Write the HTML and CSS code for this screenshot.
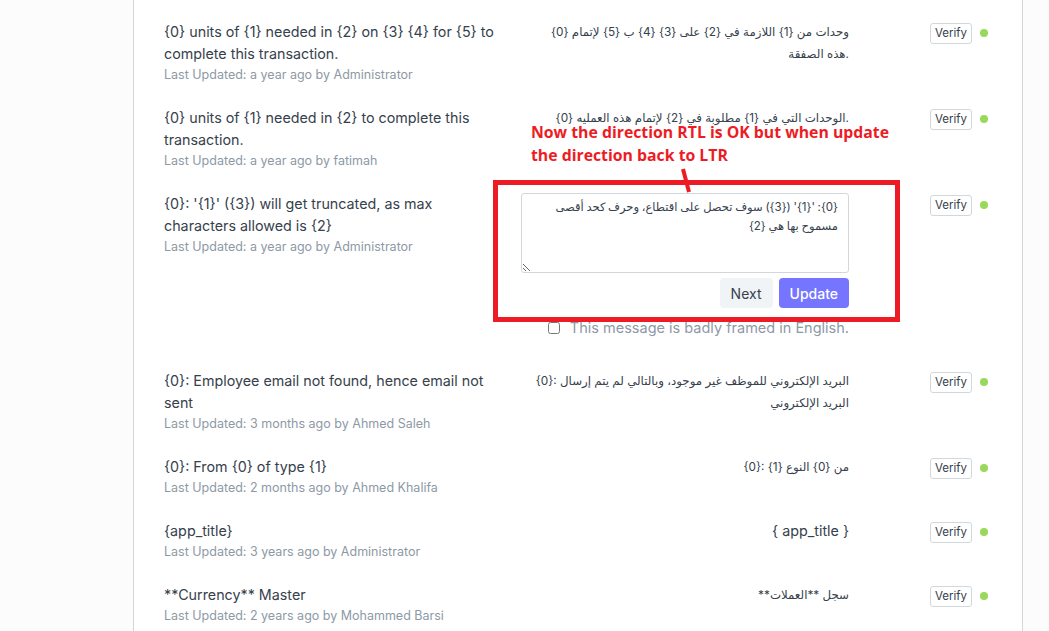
FILE: index.html
```html
<!DOCTYPE html>
<html lang="en">
<head>
  <meta charset="UTF-8">
  <meta name="viewport" content="width=device-width, initial-scale=1.0">
  <title>Translation Tool</title>
  <link rel="stylesheet" href="styles.css">
</head>
<body>
  <div class="page">
    <div class="card">
      <div class="message-list">

        <div class="message-row">
          <div class="source">
            <div class="source-text">{0} units of {1} needed in {2} on {3} {4} for {5} to complete this transaction.</div>
            <div class="meta">Last Updated: a year ago by Administrator</div>
          </div>
          <div class="translated">وحدات من {1} اللازمة في {2} على {3} {4} ب {5} لإتمام {0} هذه الصفقة.</div>
          <div class="status">
            <button class="verify-btn">Verify</button>
            <span class="dot"></span>
          </div>
        </div>

        <div class="message-row">
          <div class="source">
            <div class="source-text">{0} units of {1} needed in {2} to complete this transaction.</div>
            <div class="meta">Last Updated: a year ago by fatimah</div>
          </div>
          <div class="translated">الوحدات التي في {1} مطلوبة في {2} لإتمام هذه العمليه {0}.</div>
          <div class="status">
            <button class="verify-btn">Verify</button>
            <span class="dot"></span>
          </div>
        </div>

        <div class="message-row editing">
          <div class="source">
            <div class="source-text">{0}: '{1}' ({3}) will get truncated, as max characters allowed is {2}</div>
            <div class="meta">Last Updated: a year ago by Administrator</div>
          </div>
          <div class="editor">
            <textarea class="edit-box" dir="rtl">{0}: '{1}' ({3}) سوف تحصل على اقتطاع، وحرف كحد أقصى مسموح بها هي {2}</textarea>
            <div class="edit-actions">
              <button class="btn btn-default">Next</button>
              <button class="btn btn-primary">Update</button>
            </div>
            <label class="badly-framed">
              <input type="checkbox">
              <span>This message is badly framed in English.</span>
            </label>
          </div>
          <div class="status">
            <button class="verify-btn">Verify</button>
            <span class="dot"></span>
          </div>
        </div>

        <div class="message-row">
          <div class="source">
            <div class="source-text">{0}: Employee email not found, hence email not sent</div>
            <div class="meta">Last Updated: 3 months ago by Ahmed Saleh</div>
          </div>
          <div class="translated">{0}: البريد الإلكتروني للموظف غير موجود، وبالتالي لم يتم إرسال البريد الإلكتروني</div>
          <div class="status">
            <button class="verify-btn">Verify</button>
            <span class="dot"></span>
          </div>
        </div>

        <div class="message-row">
          <div class="source">
            <div class="source-text">{0}: From {0} of type {1}</div>
            <div class="meta">Last Updated: 2 months ago by Ahmed Khalifa</div>
          </div>
          <div class="translated">{0}: من {0} النوع {1}</div>
          <div class="status">
            <button class="verify-btn">Verify</button>
            <span class="dot"></span>
          </div>
        </div>

        <div class="message-row">
          <div class="source">
            <div class="source-text">{app_title}</div>
            <div class="meta">Last Updated: 3 years ago by Administrator</div>
          </div>
          <div class="translated latin">{ app_title }</div>
          <div class="status">
            <button class="verify-btn">Verify</button>
            <span class="dot"></span>
          </div>
        </div>

        <div class="message-row">
          <div class="source">
            <div class="source-text">**Currency** Master</div>
            <div class="meta">Last Updated: 2 years ago by Mohammed Barsi</div>
          </div>
          <div class="translated">**سجل **العملات</div>
          <div class="status">
            <button class="verify-btn">Verify</button>
            <span class="dot"></span>
          </div>
        </div>

      </div>
    </div>

    <!-- screenshot annotation -->
    <div class="note">Now the direction RTL is OK but when update<br>the direction back to LTR</div>
    <svg class="note-arrow" width="14" height="28" viewBox="0 0 14 28">
      <line x1="3" y1="2" x2="9" y2="25" stroke="#ed1c24" stroke-width="4"/>
    </svg>
    <div class="note-box"></div>
  </div>
</body>
</html>
```

FILE: styles.css
```css
body {
  margin: 0;
  background: #fcfcfc;
  font-family: 'Inter', 'Noto Sans', sans-serif;
  color: #36414c;
}
.page {
  position: relative;
  min-height: 631px;
}
.card {
  margin-left: 133px;
  width: 888px;
  min-height: 631px;
  background: #fff;
  border-left: 1px solid #d1d8dd;
  border-right: 1px solid #d1d8dd;
}
.message-list {
  padding-top: 11px;
}
.message-row {
  display: grid;
  grid-template-columns: 332px 328px 1fr;
  column-gap: 25px;
  padding: 10px 34px 12px 30px;
}
.source-text {
  font-size: 14.3px;
  line-height: 22px;
}
.meta {
  font-size: 12.5px;
  line-height: 20px;
  color: #8d99a6;
}
.translated {
  direction: ltr;
  text-align: right;
  padding-left: 12px;
  font-family: 'Inter', 'DejaVu Sans', sans-serif;
  font-size: 11.8px;
  line-height: 22px;
  color: #36414c;
}
.translated.latin {
  font-size: 14.3px;
}
.status {
  display: flex;
  justify-content: flex-end;
  align-items: center;
  gap: 8px;
  height: 22px;
  margin-top: 1px;
}
.verify-btn {
  height: 21px;
  padding: 0 4px;
  font-family: 'Inter', sans-serif;
  font-size: 11.5px;
  color: #36414c;
  background: #fff;
  border: 1px solid #d1d8dd;
  border-radius: 3px;
}
.dot {
  width: 8px;
  height: 8px;
  border-radius: 50%;
  background: #98d85b;
}
.editor {
  display: flex;
  flex-direction: column;
}
.edit-box {
  box-sizing: border-box;
  width: 328px;
  height: 80px;
  padding: 4px 10px;
  border: 1px solid #d1d8dd;
  border-radius: 3px;
  font-family: 'Inter', 'DejaVu Sans', sans-serif;
  font-size: 11.5px;
  word-spacing: -0.5px;
  line-height: 19px;
  color: #36414c;
}
.edit-actions {
  display: flex;
  justify-content: flex-end;
  gap: 6px;
  margin-top: 5px;
}
.btn {
  height: 30px;
  padding: 0 11px;
  border: none;
  border-radius: 4px;
  font-family: 'Inter', sans-serif;
  font-size: 14px;
}
.btn-default {
  background: #f0f4f7;
  color: #36414c;
}
.btn-primary {
  background: #7575ff;
  color: #fff;
  font-weight: 500;
}
.badly-framed {
  display: flex;
  justify-content: flex-end;
  align-items: center;
  gap: 10px;
  margin: 10px 0;
  font-size: 14.5px;
  line-height: 20px;
  color: #8d99a6;
}
.badly-framed input {
  margin: 0;
  width: 12px;
  height: 12px;
}
.note {
  position: absolute;
  left: 531px;
  top: 121px;
  font-family: 'Open Sans', sans-serif;
  font-weight: bold;
  font-size: 15.8px;
  line-height: 23px;
  color: #ed1c24;
}
.note-arrow {
  position: absolute;
  left: 680px;
  top: 167px;
}
.note-box {
  position: absolute;
  left: 493px;
  top: 180px;
  width: 397px;
  height: 132px;
  border: 5px solid #ed1c24;
}
```
